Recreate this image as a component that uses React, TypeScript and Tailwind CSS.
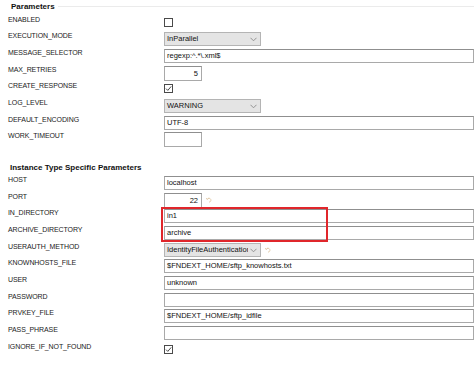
import React from "react";

type Kind =
  | { t: "check"; checked?: boolean }
  | { t: "select"; value: string; reset?: boolean }
  | { t: "text"; value?: string }
  | { t: "num"; value?: string; reset?: boolean };

type Row = { label: string; kind: Kind };

const section1: Row[] = [
  { label: "ENABLED", kind: { t: "check" } },
  { label: "EXECUTION_MODE", kind: { t: "select", value: "InParallel" } },
  { label: "MESSAGE_SELECTOR", kind: { t: "text", value: "regexp:^.*\\.xml$" } },
  { label: "MAX_RETRIES", kind: { t: "num", value: "5" } },
  { label: "CREATE_RESPONSE", kind: { t: "check", checked: true } },
  { label: "LOG_LEVEL", kind: { t: "select", value: "WARNING" } },
  { label: "DEFAULT_ENCODING", kind: { t: "text", value: "UTF-8" } },
  { label: "WORK_TIMEOUT", kind: { t: "num", value: "" } },
];

const section2: Row[] = [
  { label: "HOST", kind: { t: "text", value: "localhost" } },
  { label: "PORT", kind: { t: "num", value: "22", reset: true } },
  { label: "IN_DIRECTORY", kind: { t: "text", value: "in1" } },
  { label: "ARCHIVE_DIRECTORY", kind: { t: "text", value: "archive" } },
  { label: "USERAUTH_METHOD", kind: { t: "select", value: "IdentityFileAuthentication", reset: true } },
  { label: "KNOWNHOSTS_FILE", kind: { t: "text", value: "$FNDEXT_HOME/sftp_knowhosts.txt" } },
  { label: "USER", kind: { t: "text", value: "unknown" } },
  { label: "PASSWORD", kind: { t: "text", value: "" } },
  { label: "PRVKEY_FILE", kind: { t: "text", value: "$FNDEXT_HOME/sftp_idfile" } },
  { label: "PASS_PHRASE", kind: { t: "text", value: "" } },
  { label: "IGNORE_IF_NOT_FOUND", kind: { t: "check", checked: true } },
];

function ResetIcon() {
  return (
    <svg width="6" height="6" viewBox="0 0 7 7" className="ml-[4px] mt-[5px] shrink-0">
      <path d="M1.5 2.5 A2.3 2.3 0 1 1 3.5 6" fill="none" stroke="#dcc09a" strokeWidth="0.9" />
      <path d="M0.3 1.2 L1.5 3 L3 1.6" fill="none" stroke="#dcc09a" strokeWidth="0.9" />
    </svg>
  );
}

function Chevron() {
  return (
    <div className="absolute right-0 top-0 h-full w-[12px] bg-[#e4e4e4]">
      <svg width="7" height="5" viewBox="0 0 7 5" className="absolute right-[3px] top-[4px]">
        <path d="M0.5 0.8 L3.5 3.8 L6.5 0.8" fill="none" stroke="#8a8a8a" strokeWidth="0.9" />
      </svg>
    </div>
  );
}

function Field({ kind }: { kind: Kind }) {
  if (kind.t === "check") {
    return (
      <div className="mt-[3px] w-[9px] h-[9px] border border-[#4a4a4a] bg-white relative">
        {kind.checked && (
          <svg width="7" height="7" viewBox="0 0 7 7" className="absolute left-0 top-0">
            <path d="M1 3.6 L2.8 5.4 L6.2 1.4" fill="none" stroke="#333" strokeWidth="0.9" />
          </svg>
        )}
      </div>
    );
  }
  if (kind.t === "select") {
    return (
      <div className="flex items-start">
        <div className="relative mt-[1px] w-[97px] h-[14px] border border-[#b4b4b4] bg-[#e4e4e4] pl-[2px] text-[7.5px] leading-[12px] text-[#111] overflow-hidden whitespace-nowrap">
          {kind.value}
          <Chevron />
        </div>
        {kind.reset && <ResetIcon />}
      </div>
    );
  }
  if (kind.t === "num") {
    return (
      <div className="flex items-start">
        <div className="mt-[1px] w-[38px] h-[15px] border border-[#a9a9a9] border-t-[#8f8f8f] bg-white pr-[3px] text-right text-[7.5px] leading-[13px] text-[#111]">
          {kind.value}
        </div>
        {kind.reset && <ResetIcon />}
      </div>
    );
  }
  return (
    <div className="mt-[1px] w-[320px] h-[14px] border border-[#a9a9a9] border-t-[#8f8f8f] bg-white pl-[2px] text-[7.5px] leading-[12px] text-[#111] whitespace-nowrap">
      {kind.value}
    </div>
  );
}

function FormRow({ row }: { row: Row }) {
  return (
    <div className="flex items-start h-[16.7px] pl-[8px]">
      <div className="w-[156px] shrink-0 text-[7px] leading-[10px] text-[#222] tracking-[-0.1px]">
        {row.label}
      </div>
      <Field kind={row.kind} />
    </div>
  );
}

export default function App() {
  return (
    <div className="relative w-[474px] h-[366px] overflow-hidden bg-white font-['Liberation_Sans',Arial,sans-serif]">
      <div className="flex items-start h-[14.6px]">
        <div className="pl-[11px] pt-[2px] pr-[3px] text-[8px] leading-[10px] font-bold text-[#111]">
          Parameters
        </div>
        <div className="flex-1 mt-[6px] h-px bg-[#ebebeb]" />
      </div>
      {section1.map((r) => (
        <FormRow key={r.label} row={r} />
      ))}
      <div className="h-[26.8px] pt-[14.5px] pl-[10px] text-[8px] leading-[10px] font-bold text-[#111]">
        Instance Type Specific Parameters
      </div>
      {section2.map((r) => (
        <FormRow key={r.label} row={r} />
      ))}
      <div className="absolute left-[161px] top-[207px] w-[167px] h-[35px] border-2 border-[#e0262b]" />
    </div>
  );
}
